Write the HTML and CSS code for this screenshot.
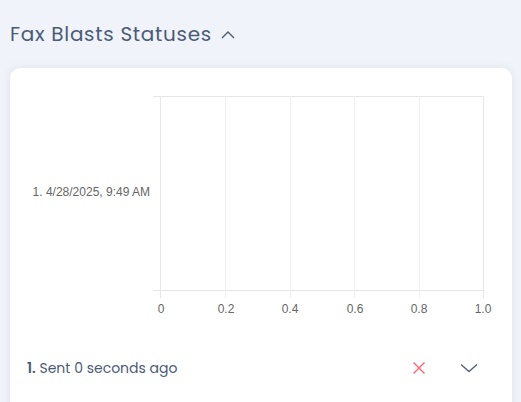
FILE: index.html
```html
<!DOCTYPE html>
<html>
<head>
<meta charset="utf-8">
<link rel="stylesheet" href="styles.css">
</head>
<body>
<div class="header">
  <h2 class="title">Fax Blasts Statuses</h2>
  <svg class="chev-up" width="14" height="9" viewBox="0 0 14 9"><path d="M1 8 L7 2 L13 8" fill="none" stroke="#4b5b76" stroke-width="1.4"/></svg>
</div>
<div class="card">
  <svg class="chart" width="501" height="270" viewBox="0 0 501 270">
    <g stroke="#e6e6e6" stroke-width="1">
      <line x1="143" y1="28.5" x2="473" y2="28.5"/>
      <line x1="143" y1="222.5" x2="473" y2="222.5"/>
      <line x1="150.5" y1="28" x2="150.5" y2="230"/>
      <line x1="215.5" y1="28" x2="215.5" y2="230" stroke="#efefef"/>
      <line x1="280.5" y1="28" x2="280.5" y2="230" stroke="#efefef"/>
      <line x1="344.5" y1="28" x2="344.5" y2="230" stroke="#efefef"/>
      <line x1="409.5" y1="28" x2="409.5" y2="230" stroke="#efefef"/>
      <line x1="473.5" y1="28" x2="473.5" y2="230"/>
    </g>
    <g class="ticks" fill="#666" text-anchor="middle">
      <text x="151" y="245">0</text>
      <text x="216" y="245">0.2</text>
      <text x="280" y="245">0.4</text>
      <text x="345" y="245">0.6</text>
      <text x="409" y="245">0.8</text>
      <text x="473" y="245">1.0</text>
    </g>
    <text class="ticks" x="140" y="128" fill="#666" text-anchor="end">1. 4/28/2025, 9:49 AM</text>
  </svg>
  <div class="row">
    <div class="row-text"><b>1.</b> Sent 0 seconds ago</div>
    <div class="row-actions">
      <svg width="14" height="14" viewBox="0 0 14 14"><path d="M1.5 1.5 L12.5 12.5 M12.5 1.5 L1.5 12.5" stroke="#f8636e" stroke-width="1.4" fill="none"/></svg>
      <svg class="chev-down" width="18" height="10" viewBox="0 0 18 10"><path d="M1 1.5 L9 8.5 L17 1.5" fill="none" stroke="#55647d" stroke-width="1.4"/></svg>
    </div>
  </div>
</div>
</body>
</html>
```
FILE: styles.css
```css
html, body {
  margin: 0;
  padding: 0;
  background: #f0f3f9;
  font-family: Poppins, "Open Sans", sans-serif;
  color: #4b5b76;
  overflow: hidden;
}
.header {
  display: flex;
  align-items: center;
  gap: 9px;
  padding: 15px 10px 0 10px;
  height: 53px;
  box-sizing: border-box;
}
.title {
  margin: 0;
  font-size: 20px;
  font-weight: 400;
  line-height: 28px;
  letter-spacing: 0.7px;
}
.card {
  margin: 15px 9px 0 10px;
  background: #fff;
  border-radius: 10px;
  box-shadow: 0 0 6px rgba(200, 210, 228, 0.5);
  height: 400px;
}
.chart {
  display: block;
}
.ticks {
  font-family: "Liberation Sans", Arial, sans-serif;
  font-size: 12px;
}
.row {
  display: flex;
  align-items: center;
  justify-content: space-between;
  padding: 20px 34px 20px 17px;
}
.row-text {
  font-size: 14px;
  line-height: 20px;
}
.row-text b {
  font-weight: 600;
}
.row-actions {
  display: flex;
  align-items: center;
  gap: 34px;
}
```
